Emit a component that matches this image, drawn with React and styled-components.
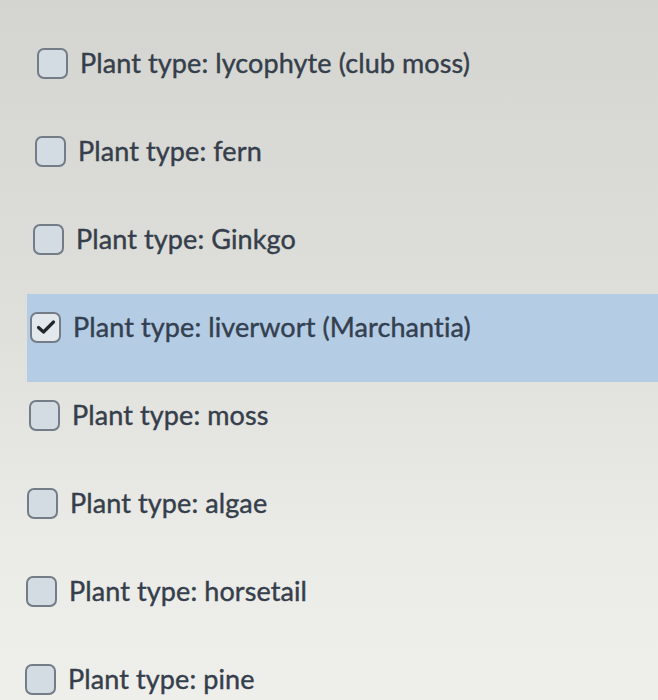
import styled, {createGlobalStyle} from 'styled-components';

const GlobalStyle = createGlobalStyle`
  html, body {
    margin: 0;
    padding: 0;
  }
  body {
    background: linear-gradient(to bottom, #d4d4d0 0%, #dfdfdb 45%, #ebebe7 75%, #efefeb 100%);
    min-height: 700px;
    font-family: Lato, "Open Sans", sans-serif;
    overflow: hidden;
  }
`;

const OptionList = styled.ul`
  list-style: none;
  margin: 0;
  padding: 30px 0 0;
`;

const OptionRow = styled.li`
  display: flex;
  align-items: center;
  gap: 12px;
  height: 88px;
  box-sizing: border-box;
  padding: 0 0 22px ${(p) => p.$indent}px;
  background: ${(p) =>
    p.$checked
      ? 'linear-gradient(to right, transparent 27px, #b5cce5 27px)'
      : 'transparent'};
`;

const Box = styled.span`
  flex: 0 0 auto;
  width: 27px;
  height: 27px;
  border: 2px solid #737c87;
  border-radius: 7px;
  background: ${(p) => (p.$checked ? '#e3e8ec' : '#d3dce3')};
  display: flex;
  align-items: center;
  justify-content: center;
`;

const Label = styled.span`
  font-size: 27px;
  line-height: 30px;
  letter-spacing: 0.1px;
  font-variant-ligatures: none;
  color: ${(p) => (p.$checked ? '#33404f' : '#353e4b')};
  -webkit-text-stroke: 0.4px ${(p) => (p.$checked ? '#33404f' : '#353e4b')};
  white-space: nowrap;
`;

const options = [
  {label: 'Plant type: lycophyte (club moss)', indent: 37},
  {label: 'Plant type: fern', indent: 35},
  {label: 'Plant type: Ginkgo', indent: 33},
  {label: 'Plant type: liverwort (Marchantia)', indent: 30, checked: true},
  {label: 'Plant type: moss', indent: 29},
  {label: 'Plant type: algae', indent: 27},
  {label: 'Plant type: horsetail', indent: 26},
  {label: 'Plant type: pine', indent: 25},
];

function CheckMark() {
  return (
    <svg width="20" height="16" viewBox="0 0 20 16">
      <path
        d="M2.5 8.5 L7.5 13 L17.5 3"
        fill="none"
        stroke="#23272d"
        strokeWidth="3.2"
        strokeLinecap="round"
        strokeLinejoin="round"
      />
    </svg>
  );
}

export default function App() {
  return (
    <>
      <GlobalStyle />
      <OptionList>
        {options.map((o) => (
          <OptionRow key={o.label} $indent={o.indent} $checked={o.checked}>
            <Box $checked={o.checked}>{o.checked && <CheckMark />}</Box>
            <Label $checked={o.checked}>{o.label}</Label>
          </OptionRow>
        ))}
      </OptionList>
    </>
  );
}
